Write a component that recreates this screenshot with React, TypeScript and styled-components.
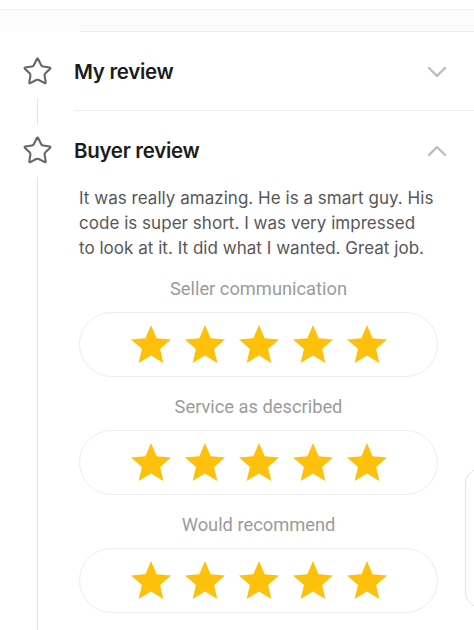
import React from 'react';
import styled, { createGlobalStyle } from 'styled-components';
import { Star } from 'lucide-react';

const GlobalStyle = createGlobalStyle`
  html, body { margin: 0; padding: 0; background: #fff; }
  body { font-family: Inter, "Noto Sans", sans-serif; -webkit-font-smoothing: antialiased; }
  * { box-sizing: border-box; }
`;

const Page = styled.div`
  position: relative;
  width: 474px;
  height: 630px;
  overflow: hidden;
  background: #fff;
`;

const TopBand = styled.div`
  margin-top: 9px;
  border-top: 1px solid #efeff1;
  height: 23px;
  background: #fcfcfd;
  display: flex;
  flex-direction: column;
  justify-content: flex-end;
`;

const BandRule = styled.div`
  margin-left: 80px;
  border-bottom: 1px solid #ececef;
`;

const Item = styled.section`
  display: grid;
  grid-template-columns: 74px minmax(0, 1fr);
`;

const Rail = styled.div`
  display: flex;
  flex-direction: column;
  align-items: center;
  color: #666;
`;

const RailTop = styled.div<{ $visible: boolean }>`
  width: 1px;
  height: 14px;
  margin-bottom: 10px;
  background: ${(p) => (p.$visible ? '#e4e4e4' : 'transparent')};
`;

const RailLine = styled.div`
  width: 1px;
  flex: 1;
  margin-top: 11px;
  background: #e4e4e4;
`;

const Body = styled.div<{ $divider?: boolean; $tail?: boolean }>`
  min-width: 0;
  padding-bottom: ${(p) => (p.$divider ? '23px' : p.$tail ? '40px' : '0')};
  border-bottom: ${(p) => (p.$divider ? '1px solid #ececec' : 'none')};
`;

const Header = styled.div`
  margin-top: 24px;
  height: 31px;
  display: flex;
  align-items: center;
  justify-content: space-between;
  padding-right: 27px;
`;

const Title = styled.h2`
  margin: 0;
  font-family: Inter, "Noto Sans", sans-serif;
  font-size: 20.5px;
  font-weight: 600;
  letter-spacing: -0.3px;
  color: #1c1c1c;
`;

const Content = styled.div`
  padding: 0 35px 0 5px;
`;

const Paragraph = styled.p`
  margin: 20px 0 0;
  font-family: Inter, "Noto Sans", sans-serif;
  font-size: 17px;
  line-height: 25px;
  color: #575757;
  letter-spacing: 0.03px;
  white-space: nowrap;
`;

const Ratings = styled.div`
  margin-top: 17px;
  margin-right: 1px;
  display: flex;
  flex-direction: column;
`;

const RatingLabel = styled.div<{ $first?: boolean }>`
  margin-top: ${(p) => (p.$first ? '0' : '19px')};
  font-family: Roboto, "Liberation Sans", sans-serif;
  font-size: 18.3px;
  line-height: 22px;
  color: #9b9b9b;
  text-align: center;
`;

const Pill = styled.div`
  margin-top: 12px;
  height: 65px;
  border: 1px solid #ededed;
  border-radius: 33px;
  display: flex;
  align-items: center;
  justify-content: center;
  gap: 6px;
`;

const SideCard = styled.div`
  position: absolute;
  left: 465px;
  top: 469px;
  width: 40px;
  height: 138px;
  border: 1px solid #e3e3e3;
  border-radius: 14px;
`;

const Chevron = ({ up }: { up?: boolean }) => (
  <svg width="20" height="12" viewBox="0 0 20 12" fill="none">
    <polyline
      points={up ? '2,10 10,2 18,10' : '2,2 10,10 18,2'}
      stroke="#bdbdbd"
      strokeWidth="2.4"
      strokeLinecap="round"
      strokeLinejoin="round"
    />
  </svg>
);

const FilledStar = () => (
  <svg width="48" height="48" viewBox="0 0 24 24">
    <path
      fill="#FDC00B"
      d="M12 17.27L18.18 21l-1.64-7.03L22 9.24l-7.19-.61L12 2 9.19 8.63 2 9.24l5.46 4.73L5.82 21z"
    />
  </svg>
);

const StarRow = () => (
  <Pill>
    {[0, 1, 2, 3, 4].map((i) => (
      <FilledStar key={i} />
    ))}
  </Pill>
);

const categories = ['Seller communication', 'Service as described', 'Would recommend'];

const reviewLines = [
  'It was really amazing. He is a smart guy. His',
  'code is super short. I was very impressed',
  'to look at it. It did what I wanted. Great job.',
];

export default function App() {
  return (
    <>
      <GlobalStyle />
      <Page>
        <TopBand>
          <BandRule />
        </TopBand>

        <Item>
          <Rail>
            <RailTop $visible={false} />
            <Star size={31} strokeWidth={1.6} />
            <RailLine />
          </Rail>
          <Body $divider>
            <Header>
              <Title>My review</Title>
              <Chevron />
            </Header>
          </Body>
        </Item>

        <Item>
          <Rail>
            <RailTop $visible />
            <Star size={31} strokeWidth={1.6} />
            <RailLine />
          </Rail>
          <Body $tail>
            <Header>
              <Title>Buyer review</Title>
              <Chevron up />
            </Header>
            <Content>
              <Paragraph>
                {reviewLines.map((line, i) => (
                  <React.Fragment key={i}>
                    {line}
                    {i < reviewLines.length - 1 && <br />}
                  </React.Fragment>
                ))}
              </Paragraph>
              <Ratings>
                {categories.map((c, i) => (
                  <React.Fragment key={c}>
                    <RatingLabel $first={i === 0}>{c}</RatingLabel>
                    <StarRow />
                  </React.Fragment>
                ))}
              </Ratings>
            </Content>
          </Body>
        </Item>

        <SideCard />
      </Page>
    </>
  );
}
